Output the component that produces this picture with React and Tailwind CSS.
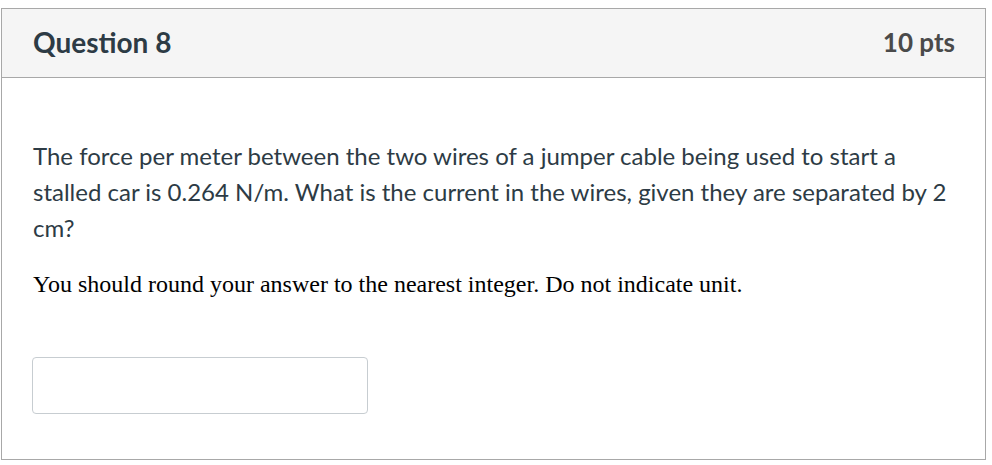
export default function App() {
  return (
    <div className="w-[992px] h-[465px] bg-white pt-2 pl-px" style={{ fontFamily: 'Lato, "Noto Sans", sans-serif' }}>
      <div className="w-[985px] h-[452px] border border-[#a8a8a8] flex flex-col">
        <div className="h-[69px] bg-[#f5f5f5] border-b border-[#a8a8a8] flex items-center justify-between pl-[31px] pr-[30px] pb-[3px]">
          <div className="text-[28px] font-bold text-[#2d3b45] leading-none">Question 8</div>
          <div className="text-[26px] font-bold text-[#4a4a4a] leading-none">10 pts</div>
        </div>
        <div className="pl-[31px] pr-[30px] pt-[60px]">
          <p className="text-[24px] leading-[36px] text-[#2d3b45]">
            The force per meter between the two wires of a jumper cable being used to start a stalled car is 0.264 N/m. What is the current in the wires, given they are separated by 2 cm?
          </p>
          <p className="mt-[20px] text-[24px] leading-[36px] text-black" style={{ fontFamily: '"Liberation Serif", serif' }}>
            You should round your answer to the nearest integer. Do not indicate unit.
          </p>
          <input type="text" className="mt-[55px] -ml-px block w-[336px] h-[57px] border border-[#c7cdd1] rounded-[4px] bg-white" />
        </div>
      </div>
    </div>
  );
}
